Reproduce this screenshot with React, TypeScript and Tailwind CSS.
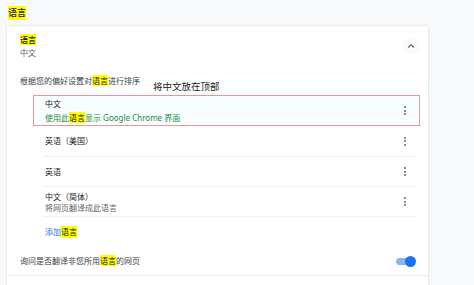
import React from 'react';

const Mark = ({ children }: { children: React.ReactNode }) => (
  <span className="bg-[#ffff00] text-[#202124]">{children}</span>
);

const Kebab = () => (
  <div className="flex w-[10px] flex-col items-center gap-[1.5px]">
    <span className="h-[2px] w-[2px] rounded-full bg-[#5f6368]"></span>
    <span className="h-[2px] w-[2px] rounded-full bg-[#5f6368]"></span>
    <span className="h-[2px] w-[2px] rounded-full bg-[#5f6368]"></span>
  </div>
);

const Sep = () => <div className="ml-[10px] mr-[4px] h-px bg-[#f1f1f1]"></div>;

export default function App() {
  return (
    <div
      className="relative h-[285px] w-[474px] overflow-hidden bg-[#f8f9fa] text-[8px] text-[#202124]"
      style={{ fontFamily: '"Noto Sans", "Noto Sans CJK SC", sans-serif' }}
    >
      {/* page title */}
      <div className="flex h-[26px] items-center pl-[8px] text-[9px] font-medium">
        <Mark>语言</Mark>
      </div>

      {/* settings card */}
      <div className="ml-[7px] w-[421px] bg-white shadow-[0_0_2px_rgba(60,64,67,0.25)]">
        <div className="flex items-center justify-between pl-[13px] pr-[8px] pt-[7px]">
          <div className="leading-[13px]">
            <div className="font-medium">
              <Mark>语言</Mark>
            </div>
            <div className="text-[#5f6368]">中文</div>
          </div>
          <div className="flex h-[18px] w-[18px] items-center justify-center rounded-full bg-[#fafafa]">
            <svg width="8" height="6" viewBox="0 0 8 6" fill="none">
              <path d="M1.2 4.5 L4 1.7 L6.8 4.5" stroke="#5f6368" strokeWidth="1.2" />
            </svg>
          </div>
        </div>

        <div className="mt-[16px] pl-[13px] leading-[12px] text-[#3c4043]">
          根据您的偏好设置对<Mark>语言</Mark>进行排序
        </div>

        <div className="ml-[26px] mr-[8px] mt-[8px]">
          <div className="flex h-[31px] items-center justify-between border border-[#e8959e] bg-[#f8fdff] pl-[11px] pr-[9px]">
            <div className="leading-[14px]">
              <div>中文</div>
              <div className="text-[#1e8e3e]">
                使用此<Mark>语言</Mark>显示 Google Chrome 界面
              </div>
            </div>
            <Kebab />
          </div>

          <div className="flex h-[30px] items-center justify-between pl-[12px] pr-[10px]">
            <span>英语（美国）</span>
            <Kebab />
          </div>
          <Sep />
          <div className="flex h-[29px] items-center justify-between pl-[12px] pr-[10px]">
            <span>英语</span>
            <Kebab />
          </div>
          <Sep />
          <div className="flex h-[29px] items-center justify-between pl-[12px] pr-[10px]">
            <div className="leading-[11px]">
              <div>中文（简体）</div>
              <div className="text-[#5f6368]">将网页翻译成此语言</div>
            </div>
            <Kebab />
          </div>
          <Sep />
          <div className="flex h-[30px] items-center pl-[12px] text-[#1a73e8]">
            添加<Mark>语言</Mark>
          </div>
        </div>

        <div className="flex h-[28px] items-center justify-between pl-[13px] pr-[12px]">
          <span className="text-[#3c4043]">
            询问是否翻译非您所用<Mark>语言</Mark>的网页
          </span>
          <div className="relative h-[11px] w-[20px]">
            <div className="absolute left-0 top-[2px] h-[7px] w-[17px] rounded-full bg-[#8ab4f8]"></div>
            <div className="absolute right-0 top-0 h-[11px] w-[11px] rounded-full bg-[#1a73e8]"></div>
          </div>
        </div>
        <div className="h-px bg-[#eeeeee]"></div>
        <div className="h-[20px]"></div>
      </div>

      {/* drag hint overlay */}
      <div className="absolute left-[153px] top-[80px] text-[9.5px] leading-[14px] text-[#202124]">
        将中文放在顶部
      </div>
    </div>
  );
}
